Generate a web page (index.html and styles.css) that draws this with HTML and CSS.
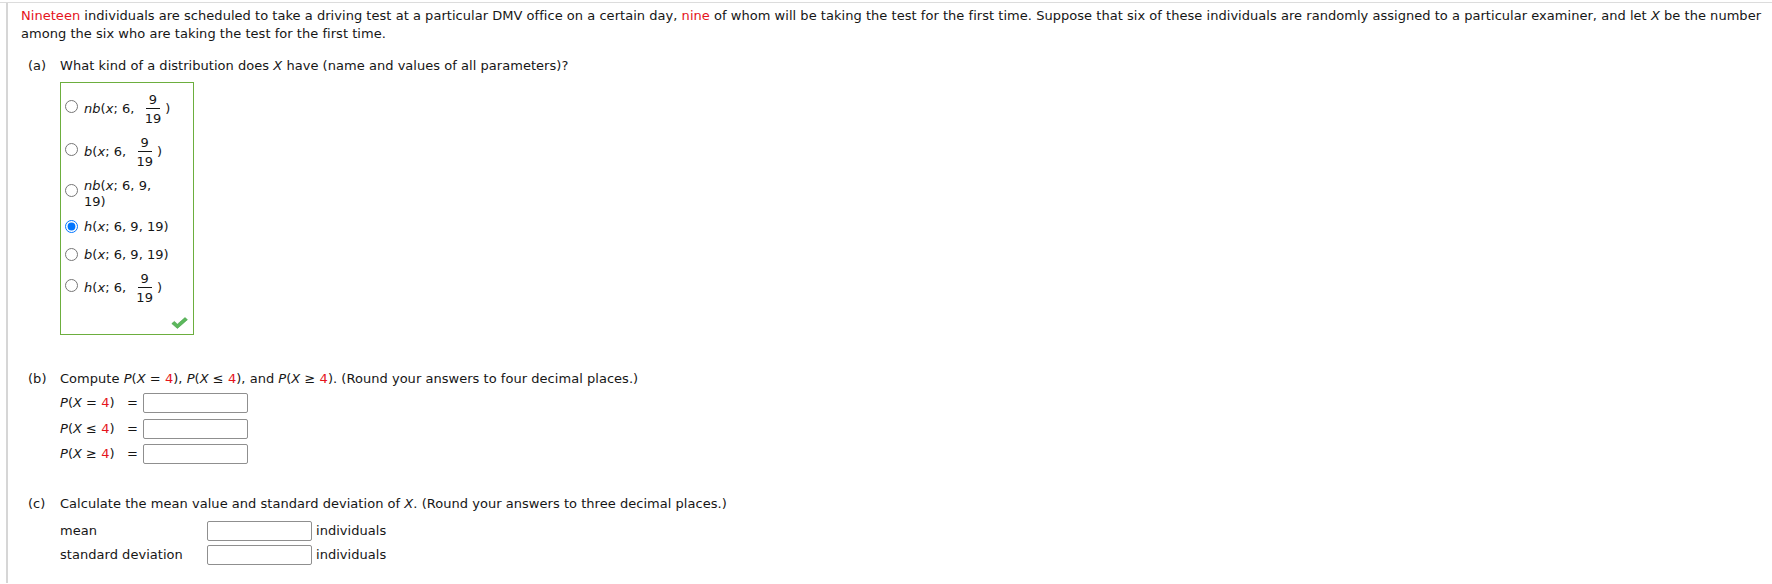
FILE: index.html
```html
<!DOCTYPE html>
<html>
<head>
<meta charset="utf-8">
<link rel="stylesheet" href="styles.css">
</head>
<body>
<div class="frame">
  <div class="content">
    <p class="intro"><span class="red">Nineteen</span> individuals are scheduled to take a driving test at a particular DMV office on a certain day, <span class="red">nine</span> of whom will be taking the test for the first time. Suppose that six of these individuals are randomly assigned to a particular examiner, and let <i>X</i> be the number among the six who are taking the test for the first time.</p>

    <div class="part part-a">
      <div class="tag">(a)</div>
      <div class="body">
        <div class="q">What kind of a distribution does <i>X</i> have (name and values of all parameters)?</div>
        <div class="choices">
          <label class="opt opt-frac opt-1"><input type="radio" name="d"><span class="lbl"><i>nb</i>(<i>x</i>; 6, <span class="frac"><span class="num">9</span><span class="den">19</span></span>)</span></label>
          <label class="opt opt-frac opt-2"><input type="radio" name="d"><span class="lbl"><i>b</i>(<i>x</i>; 6, <span class="frac"><span class="num">9</span><span class="den">19</span></span>)</span></label>
          <label class="opt opt-wrap opt-3"><input type="radio" name="d"><span class="lbl"><i>nb</i>(<i>x</i>; 6, 9, 19)</span></label>
          <label class="opt opt-4"><input type="radio" name="d" checked><span class="lbl"><i>h</i>(<i>x</i>; 6, 9, 19)</span></label>
          <label class="opt opt-5"><input type="radio" name="d"><span class="lbl"><i>b</i>(<i>x</i>; 6, 9, 19)</span></label>
          <label class="opt opt-frac opt-6"><input type="radio" name="d"><span class="lbl"><i>h</i>(<i>x</i>; 6, <span class="frac"><span class="num">9</span><span class="den">19</span></span>)</span></label>
          <div class="check-row">
            <svg class="check" width="17" height="12" viewBox="0 0 17 12"><path d="M0.8 6.6 L3.4 4.4 L6.4 7.2 L14 0.6 L16.4 2.7 L6.4 11.4 Z" fill="#5cb85c" stroke="#43a047" stroke-width="0.6" stroke-linejoin="round"/></svg>
          </div>
        </div>
      </div>
    </div>

    <div class="part part-b">
      <div class="tag">(b)</div>
      <div class="body">
        <div class="q">Compute <i>P</i>(<i>X</i> = <span class="red">4</span>), <i>P</i>(<i>X</i> ≤ <span class="red">4</span>), and <i>P</i>(<i>X</i> ≥ <span class="red">4</span>). (Round your answers to four decimal places.)</div>
        <div class="prow"><span class="plabel"><i>P</i>(<i>X</i> = <span class="red">4</span>)</span><span class="eq">=</span><input class="ans" type="text"></div>
        <div class="prow"><span class="plabel"><i>P</i>(<i>X</i> ≤ <span class="red">4</span>)</span><span class="eq">=</span><input class="ans" type="text"></div>
        <div class="prow"><span class="plabel"><i>P</i>(<i>X</i> ≥ <span class="red">4</span>)</span><span class="eq">=</span><input class="ans" type="text"></div>
      </div>
    </div>

    <div class="part part-c">
      <div class="tag">(c)</div>
      <div class="body">
        <div class="q">Calculate the mean value and standard deviation of <i>X</i>. (Round your answers to three decimal places.)</div>
        <div class="crow"><span class="clabel">mean</span><input class="ans" type="text"><span class="unit">individuals</span></div>
        <div class="crow"><span class="clabel">standard deviation</span><input class="ans" type="text"><span class="unit">individuals</span></div>
      </div>
    </div>
  </div>
</div>
</body>
</html>
```

FILE: styles.css
```css
html, body {
  margin: 0;
  padding: 0;
  background: #fff;
}
body {
  font-family: "DejaVu Sans", Verdana, sans-serif;
  font-size: 13px;
  line-height: 18px;
  letter-spacing: 0.035px;
  color: #161616;
}
.frame {
  margin-top: 2px;
  border-top: 1px solid #dcdcdc;
  height: 581px;
  box-sizing: border-box;
}
.content {
  margin-left: 6px;
  border-left: 2px solid #d6d6d6;
  height: 100%;
  box-sizing: border-box;
  padding: 4px 10px 0 13px;
}
.red { color: #e5141c; }
i { font-style: italic; }
.intro {
  margin: 0;
}
.part {
  display: flex;
  padding-left: 7px;
}
.tag {
  width: 32px;
  flex: none;
}
.body {
  flex: 1;
}
.part-a { margin-top: 14px; }
.part-b { margin-top: 35px; }
.part-c { margin-top: 31px; }

.choices {
  margin-top: 6.5px;
  width: 128px;
  border: 1px solid #6cae3e;
  padding: 8px 0 5px 4px;
  box-sizing: content-box;
  display: flex;
  flex-direction: column;
}
.opt {
  display: flex;
  align-items: center;
  gap: 6px;
  height: 20px;
}
.opt input {
  margin: 0;
  width: 13px;
  height: 13px;
  flex: none;
}
.opt .lbl { line-height: 16px; white-space: nowrap; }
.opt-frac { height: 36px; }
.opt-frac input { margin-bottom: 5px; }
.opt-wrap { height: 34px; }
.opt-wrap .lbl { width: 84px; white-space: normal; }
.opt-wrap input { margin-bottom: 7px; }
.opt-2 { margin-top: 7px; }
.opt-3 { margin-top: 7px; }
.opt-4 { margin-top: 6px; }
.opt-5 { margin-top: 8px; }
.opt-6 { margin-top: 5px; }

.frac {
  display: inline-flex;
  flex-direction: column;
  align-items: center;
  vertical-align: middle;
  line-height: 15px;
  margin: 0 1px 0 3px;
}
.frac .num { border-bottom: 1px solid #161616; padding: 0 3px 1.5px; }
.frac .den { padding: 1.5px 3px 0; }
.check-row {
  display: flex;
  justify-content: flex-end;
  padding-right: 5px;
  margin-top: 11px;
}
.check { display: block; }

.prow {
  display: flex;
  align-items: center;
  height: 20px;
  margin-top: 5.5px;
}
.part-b .q { margin-bottom: 1px; }
.plabel { width: 67px; }
.eq { width: 16px; }
.ans {
  width: 105px;
  height: 20px;
  box-sizing: border-box;
  border: 1px solid #8f8f8f;
  border-radius: 2px;
  margin: 0;
  padding: 0;
  font: inherit;
}
.part-c .q { margin-bottom: 7.5px; }
.crow {
  display: flex;
  align-items: center;
  height: 20px;
  margin-bottom: 4px;
}
.clabel { width: 147px; }
.unit { margin-left: 4px; }
```
